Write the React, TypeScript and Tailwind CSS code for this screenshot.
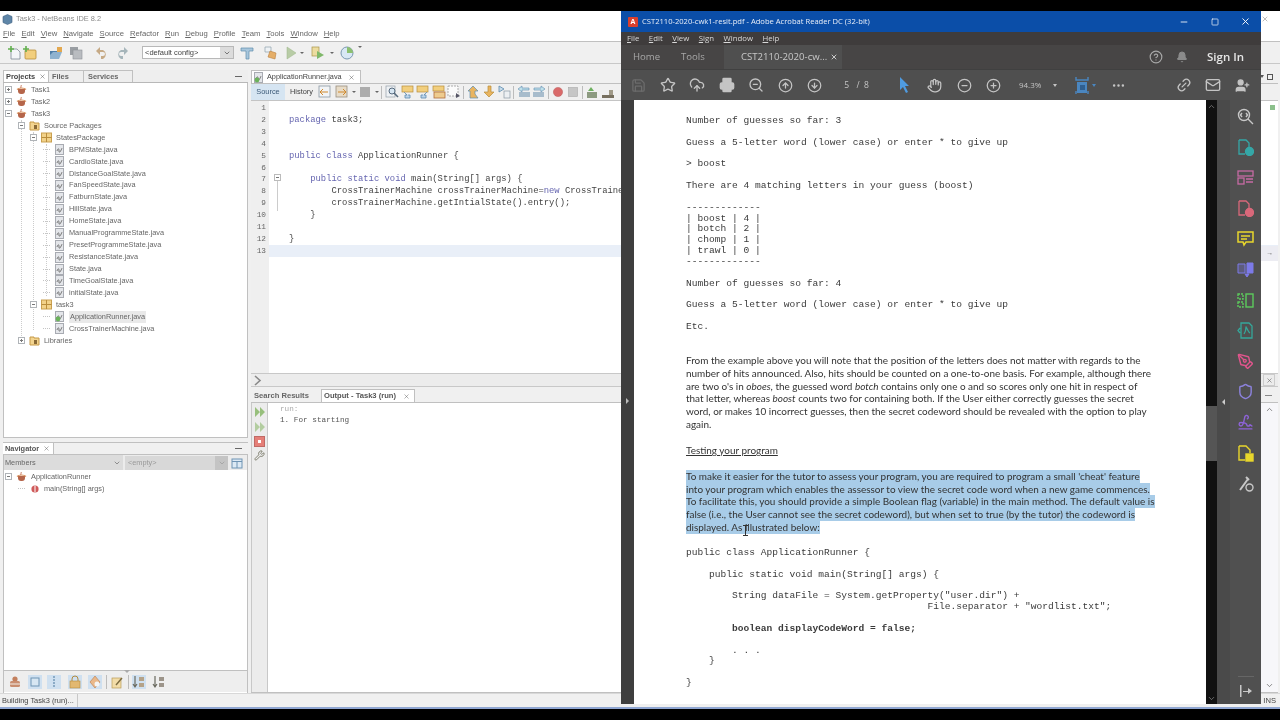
import React from 'react';
import {
  Save, Star, CloudUpload, Printer, ZoomOut, CircleArrowUp, CircleArrowDown, Hand, CircleMinus, CirclePlus,
  CircleHelp, Bell, Mail, Link2, UserPlus, ChevronUp, ChevronDown, Minus, Square, X, MoreHorizontal, Wrench,
  PenTool, Shield, Signature,
} from 'lucide-react';

const nbMenu = ['File', 'Edit', 'View', 'Navigate', 'Source', 'Refactor', 'Run', 'Debug', 'Profile', 'Team', 'Tools', 'Window', 'Help'];
const stateFiles = ['BPMState.java', 'CardioState.java', 'DistanceGoalState.java', 'FanSpeedState.java', 'FatburnState.java', 'HillState.java', 'HomeState.java', 'ManualProgrammeState.java', 'PresetProgrammeState.java', 'ResistanceState.java', 'State.java', 'TimeGoalState.java', 'initialState.java'];

function Box({ open }: { open?: boolean }) {
  return (
    <span className="relative w-[7px] h-[7px] border border-[#b0b4b8] bg-white shrink-0">
      <span className="absolute left-[1px] top-[2px] w-[3px] h-px bg-[#777]" />
      {!open && <span className="absolute left-[2px] top-[1px] w-px h-[3px] bg-[#777]" />}
    </span>
  );
}

function Cup() {
  return (
    <svg width="11" height="11" viewBox="0 0 11 11" className="shrink-0">
      <path d="M2 5h7v2a3 3 0 0 1-3 3H5a3 3 0 0 1-3-3z" fill="#b5654a" />
      <path d="M1 5.5c2-2 7-2 9 0" fill="none" stroke="#d88f5a" strokeWidth="1.2" />
      <path d="M5 1c1 1-1 2 0 3" fill="none" stroke="#c9785a" />
    </svg>
  );
}

function JavaDoc({ run }: { run?: boolean }) {
  return (
    <svg width="9" height="11" viewBox="0 0 9 11" className="shrink-0">
      <rect x="0.5" y="0.5" width="8" height="10" fill="#e4e6ea" stroke="#a8abb2" />
      <path d="M2 7c1-3 2-3 2 0s2 0 3-3" fill="none" stroke="#777" />
      {run && <circle cx="3" cy="8" r="2.4" fill="#6bb35b" />}
    </svg>
  );
}

function Pkg() {
  return (
    <svg width="11" height="11" viewBox="0 0 11 11" className="shrink-0">
      <rect x="0.5" y="1" width="10" height="9" fill="#f2d28a" stroke="#c9a050" />
      <path d="M5.5 1v9M0.5 5.5h10" stroke="#b98d3c" />
    </svg>
  );
}

function Folder() {
  return (
    <svg width="11" height="11" viewBox="0 0 11 11" className="shrink-0">
      <path d="M1 2h4v1h5v7H1z" fill="#f3d48f" stroke="#c69a48" />
      <rect x="5" y="5" width="3" height="4" fill="#8a6a36" />
    </svg>
  );
}

function Row({ pad, box, open, icon, label, active }: { pad: string; box?: boolean; open?: boolean; icon: React.ReactNode; label: string; active?: boolean }) {
  return (
    <div className={`h-[11.95px] flex items-center ${pad}`}>
      {box ? <Box open={open} /> : <span className="w-[7px] border-t border-dotted border-[#c4c4c4]" />}
      <span className="ml-[4px] w-[11px] flex justify-center shrink-0">{icon}</span>
      <span className={`ml-[4px] leading-3 ${active ? 'bg-[#e9e9e9] px-[1px] -ml-[-3px]' : ''}`}>{label}</span>
    </div>
  );
}

const Drop = ({ c = '#666' }: { c?: string }) => (
  <span className="w-0 h-0 border-x-[2px] border-x-transparent border-t-[2px] shrink-0" style={{ borderTopColor: c }} />
);

// IDE toolbar pictures, drawn on a 14 box
function Tb({ n, x = '', on }: { n: string; x?: string; on?: boolean }) {
  const pics: Record<string, React.ReactNode> = {
    newFile: <><path d="M3 3h6l3 3v7H3z" fill="#f4f6f8" stroke="#7f8a94" strokeWidth="0.8" /><path d="M3 0v6M0 3h6" stroke="#63b04f" strokeWidth="1.6" /></>,
    newProj: <><rect x="2" y="4" width="11" height="9" rx="1" fill="#f2cf7e" stroke="#b88d3a" strokeWidth="0.8" /><path d="M3 0v6M0 3h6" stroke="#63b04f" strokeWidth="1.6" /></>,
    open: <><path d="M1 5h9v8H1z" fill="#4f7ea8" /><path d="M1 9l3-3h9l-3 7H1z" fill="#8fb2cf" /><rect x="8" y="1" width="5" height="5" fill="#e3a850" /></>,
    saveAll: <><rect x="1" y="1" width="8" height="8" fill="#9a9ea3" /><rect x="4" y="4" width="9" height="9" fill="#b9bcc0" stroke="#8d9196" strokeWidth="0.6" /></>,
    undo: <path d="M1 5l4-4v3h3a5 5 0 0 1 0 9H6v-3h2a2 2 0 0 0 0-4H5v3z" fill="#c6aa86" />,
    redo: <path d="M13 5L9 1v3H6a5 5 0 0 0 0 9h2v-3H6a2 2 0 0 1 0-4h3v3z" fill="#a6b5ba" />,
    hammer: <path d="M1 2h12v3H9v8H6V5H1z" fill="#a8c6dc" stroke="#5e8cae" strokeWidth="0.7" />,
    broom: <><path d="M2 1h6v5H2z" fill="#eef2f5" stroke="#8ea0ae" strokeWidth="0.7" /><path d="M7 5l6 2-1 6-7-2z" fill="#e5ae68" stroke="#b98040" strokeWidth="0.6" /></>,
    run: <path d="M3 1l9 6-9 6z" fill="#b8cca6" stroke="#9db489" strokeWidth="0.5" />,
    debug: <><rect x="1" y="1" width="7" height="9" fill="#ecdca0" stroke="#a89448" strokeWidth="0.7" /><path d="M6 5l7 4-7 4z" fill="#7fb86a" /></>,
    back: <><rect x="1" y="1" width="11" height="11" fill="#f2f4f6" stroke="#8b98a4" strokeWidth="0.8" /><path d="M5 4L2 7l3 3M2 7h8" stroke="#d0892c" fill="none" /></>,
    fwd: <><rect x="1" y="1" width="11" height="11" fill="#e8dcc8" stroke="#9a9080" strokeWidth="0.8" /><path d="M8 4l3 3-3 3M11 7H3" stroke="#d0892c" fill="none" /></>,
    block: <rect x="2" y="2" width="10" height="10" fill="#adadad" />,
    find: <><rect x="1" y="1" width="9" height="11" fill="#eef1f4" stroke="#96a0aa" strokeWidth="0.7" /><circle cx="7" cy="6" r="3" fill="#d7e6f2" stroke="#55697c" /><path d="M9 8l4 4" stroke="#55697c" strokeWidth="1.6" /></>,
    prevOcc: <><rect x="1" y="1" width="11" height="6" fill="#f2cf7e" stroke="#b88d3a" strokeWidth="0.7" /><path d="M3 7l3 3h-2v3h5v-3H7" fill="#bcd4ea" stroke="#5e8cae" strokeWidth="0.8" /></>,
    nextOcc: <><rect x="1" y="1" width="11" height="6" fill="#f2cf7e" stroke="#b88d3a" strokeWidth="0.7" /><path d="M11 7l-3 3h2v3H5v-3h2" fill="#bcd4ea" stroke="#5e8cae" strokeWidth="0.8" /></>,
    toggle: <><rect x="1" y="1" width="11" height="5" fill="#f2cf7e" stroke="#b88d3a" strokeWidth="0.7" /><rect x="2" y="7" width="11" height="6" fill="#eecb8e" stroke="#b06c3a" strokeWidth="0.8" /></>,
    selBox: <><rect x="1" y="1" width="10" height="10" fill="#fbfbfb" stroke="#8c8c8c" strokeWidth="0.7" strokeDasharray="2 1" /><path d="M9 8l4 3-4 2z" fill="#556" /></>,
    up: <path d="M7 1l5 5H9v3l3 4H4V6H2z" fill="#e9b45f" stroke="#5e8cae" strokeWidth="0.7" />,
    down: <path d="M6 1h3v6h3l-5 5-5-5h4z" fill="#e9b45f" stroke="#b88d3a" strokeWidth="0.7" />,
    bm: <><path d="M2 1l5 3-5 3z" fill="#c7dcea" stroke="#5e8cae" strokeWidth="0.8" /><rect x="7" y="6" width="6" height="7" fill="#eceff2" stroke="#8b98a4" strokeWidth="0.7" /></>,
    shL: <><rect x="2" y="7" width="11" height="5" fill="#a8bccc" /><path d="M1 4l4-3v2h7v2H5v2z" fill="#bfe0ea" stroke="#5e8cae" strokeWidth="0.6" /></>,
    shR: <><rect x="1" y="7" width="11" height="5" fill="#a8bccc" /><path d="M13 4L9 1v2H2v2h7v2z" fill="#bfe0ea" stroke="#5e8cae" strokeWidth="0.6" /></>,
    rec: <circle cx="7" cy="7" r="4.6" fill="#d96a6a" stroke="#bb5a5a" strokeWidth="0.5" />,
    stop: <rect x="2.5" y="2.5" width="9" height="9" fill="#c6c6c6" stroke="#a8a8a8" strokeWidth="0.6" />,
    check: <><rect x="2" y="7" width="10" height="6" fill="#8c9a80" /><path d="M3 6l3-4 3 4z" fill="#6db05f" /></>,
    under: <><rect x="1" y="10" width="12" height="3" fill="#77705f" /><rect x="8" y="5" width="4" height="5" fill="#a09a88" /></>,
    group: <><circle cx="7" cy="4" r="2.6" fill="#c3805e" /><rect x="2" y="6" width="10" height="6" rx="1.5" fill="#c98e70" /><path d="M2 9h10" stroke="#f4efe8" /></>,
    hollow: <rect x="3" y="3" width="8" height="8" fill="#d7e6f2" stroke="#6f94b4" />,
    bar: <path d="M7 1v12" stroke="#6f94b4" strokeWidth="1.4" strokeDasharray="2 1" />,
    lock: <><path d="M4 6V4a3 3 0 0 1 6 0v2" fill="none" stroke="#b48a3e" /><rect x="2" y="6" width="10" height="7" fill="#e2b870" stroke="#b48a3e" strokeWidth="0.6" /></>,
    cls: <><path d="M7 1l5 6-5 6-5-6z" fill="#e9b88a" stroke="#b87a4a" strokeWidth="0.6" /><circle cx="9" cy="9" r="2.5" fill="#f4f4f4" /></>,
    pen: <><rect x="2" y="3" width="9" height="10" fill="#f2dca8" stroke="#b89a58" strokeWidth="0.7" /><path d="M6 10l6-7" stroke="#7a6a40" strokeWidth="1.4" /></>,
    sortA: <><path d="M3 1v10M1 9l2 3 2-3" stroke="#6a6a60" fill="none" strokeWidth="1.2" /><rect x="7" y="2" width="5" height="4" fill="#b4a288" /><rect x="7" y="8" width="5" height="4" fill="#b4a288" /></>,
    sortB: <><path d="M3 1v10M1 9l2 3 2-3" stroke="#6a6a60" fill="none" strokeWidth="1.2" /><rect x="7" y="2" width="5" height="4" fill="#9c948a" /><rect x="7" y="8" width="5" height="4" fill="#9c948a" /></>,
  };
  return (
    <span className={`shrink-0 flex ${x} ${on ? 'bg-[#cfe0f0]' : ''}`}>
      <svg width="14" height="14" viewBox="0 0 14 14">{pics[n]}</svg>
    </span>
  );
}

function Code({ children }: { children?: React.ReactNode }) {
  return <div className="h-[11.92px] leading-3 whitespace-pre">{children || ' '}</div>;
}

const K = ({ children }: { children: React.ReactNode }) => <span className="text-[#6666b0]">{children}</span>;

function NetBeans() {
  return (
    <div className="flex-1 flex flex-col min-h-0 bg-[#f0f0f0] text-[#444] font-['Liberation_Sans',sans-serif] text-[7.4px]">
      <div className="h-[16px] bg-white flex items-center pl-[2px] text-[#8a8a8a] text-[7.4px] shrink-0">
        <svg width="11" height="11" viewBox="0 0 11 11" className="mr-[3px]">
          <path d="M5.5 0.5l4.5 2v6l-4.5 2-4.5-2v-6z" fill="#5f86a8" stroke="#3f5f80" strokeWidth="0.6" />
        </svg>
        Task3 - NetBeans IDE 8.2
        <span className="ml-auto pr-[11px] text-[#999]"><X size={8} /></span>
      </div>
      <div className="h-[15px] bg-white flex items-center pl-[3px] gap-[6px] shrink-0 border-b border-[#c0c0c0] text-[#666] text-[7.7px]">
        {nbMenu.map((m) => (
          <span key={m}><span className="underline">{m[0]}</span>{m.slice(1)}</span>
        ))}
      </div>
      <div className="h-[22px] flex items-center border-b border-[#c8c8c8] shrink-0 pl-[8px]">
        <Tb n="newFile" x="mr-[1px]" />
        <Tb n="newProj" x="mr-[12px]" />
        <Tb n="open" x="mr-[6px]" />
        <Tb n="saveAll" x="mr-[12px]" />
        <Tb n="undo" x="mr-[6px]" />
        <Tb n="redo" x="mr-[13px]" />
        <div className="w-[92px] h-[13px] bg-white border border-[#b8b8b8] flex items-center justify-between pl-[2px] text-[7.5px] text-[#444] mr-[6px] shrink-0">
          &lt;default config&gt;
          <span className="w-[13px] h-full bg-[#dcdcdc] flex items-center justify-center"><ChevronDown size={8} /></span>
        </div>
        <Tb n="hammer" x="mr-[9px]" />
        <Tb n="broom" x="mr-[7px]" />
        <Tb n="run" x="mr-[2px]" />
        <Drop />
        <Tb n="debug" x="ml-[7px] mr-[5px]" />
        <Drop />
        <span className="ml-[6px] flex items-center">
          <svg width="14" height="14" viewBox="0 0 14 14"><circle cx="7" cy="7" r="6" fill="#d8e8f4" stroke="#7a98b0" /><path d="M7 7V1a6 6 0 0 1 6 6z" fill="#8cc070" /></svg>
          <span className="ml-[4px]"><Drop /></span>
        </span>
      </div>
      <div className="flex-1 min-h-0 flex pt-[6px]">
        <div className="w-[248px] pl-[3px] shrink-0 flex flex-col">
          <div className="h-[13px] flex items-stretch font-bold text-[#666] text-[7.4px] border-b border-[#b8b8b8] shrink-0 bg-[#eeeeee]">
            <span className="w-[46px] bg-white border border-b-0 border-[#c0c0c0] flex items-center pl-[2px] gap-[4px] text-[#444]">Projects <X size={7} strokeWidth={1.5} /></span>
            <span className="w-[35px] border-r border-t border-[#c0c0c0] flex items-center pl-[3px]">Files</span>
            <span className="w-[49px] border-r border-t border-[#c0c0c0] flex items-center pl-[4px]">Services</span>
            <span className="ml-auto mr-[6px] self-center w-[7px] h-px bg-[#666]" />
          </div>
          <div className="relative h-[355px] pt-[1px] bg-white border-x border-[#c0c0c0] border-b shrink-0 text-[7.35px] text-[#666]">
            <span className="absolute left-[17px] top-[37px] h-[220px] border-l border-dotted border-[#ccc]" />
            <span className="absolute left-[29px] top-[49px] h-[198px] border-l border-dotted border-[#ccc]" />
            <span className="absolute left-[42px] top-[61px] h-[152px] border-l border-dotted border-[#ccc]" />
            <Row pad="pl-[1px]" box icon={<Cup />} label="Task1" />
            <Row pad="pl-[1px]" box icon={<Cup />} label="Task2" />
            <Row pad="pl-[1px]" box open icon={<Cup />} label="Task3" />
            <Row pad="pl-[14px]" box open icon={<Folder />} label="Source Packages" />
            <Row pad="pl-[26px]" box open icon={<Pkg />} label="StatesPackage" />
            {stateFiles.map((f) => (
              <Row key={f} pad="pl-[39px]" icon={<JavaDoc />} label={f} />
            ))}
            <Row pad="pl-[26px]" box open icon={<Pkg />} label="task3" />
            <Row pad="pl-[39px]" icon={<JavaDoc run />} label="ApplicationRunner.java" active />
            <Row pad="pl-[39px]" icon={<JavaDoc />} label="CrossTrainerMachine.java" />
            <Row pad="pl-[14px]" box icon={<Folder />} label="Libraries" />
          </div>
          <div className="h-[4px] shrink-0" />
          <div className="h-[13px] flex items-stretch font-bold text-[#555] text-[7.4px] border-t border-b border-[#c0c0c0] shrink-0">
            <span className="w-[51px] bg-white border-r border-[#c0c0c0] flex items-center pl-[2px] gap-[4px]">Navigator <X size={7} strokeWidth={1.5} /></span>
            <span className="ml-auto mr-[6px] self-center w-[7px] h-px bg-[#666]" />
          </div>
          <div className="flex-1 min-h-0 bg-white border-x border-[#c0c0c0] flex flex-col text-[7.35px] text-[#666]">
            <div className="h-[15px] flex items-center bg-[#ececec] shrink-0 gap-[2px]">
              <span className="w-[119px] h-full bg-[#dcdcdc] flex items-center justify-between px-[1px]">Members<ChevronDown size={8} className="mr-[1px]" /></span>
              <span className="w-[103px] h-[14px] bg-[#d8d8d8] flex items-center justify-between pl-[3px] text-[#999]">&lt;empty&gt;<span className="w-[13px] h-full bg-[#c4c4c4] flex items-center justify-center"><ChevronDown size={8} /></span></span>
              <svg width="12" height="12" viewBox="0 0 12 12" className="ml-[1px]"><rect x="1" y="2" width="10" height="9" fill="#dce9f4" stroke="#6f94b4" /><path d="M1 4.5h10M6 4.5V11" stroke="#6f94b4" /></svg>
            </div>
            <div className="pt-[1px] h-[200px] shrink-0">
              <Row pad="pl-[1px]" box open icon={<Cup />} label="ApplicationRunner" />
              <Row pad="pl-[14px]" icon={<svg width="8" height="8" viewBox="0 0 8 8"><circle cx="4" cy="4" r="3.6" fill="#cf5a5a" /><path d="M4 1v6" stroke="#fff" /></svg>} label="main(String[] args)" />
            </div>
            <div className="h-[22px] border-t border-[#c0c0c0] bg-[#eeeeee] flex items-center pl-[4px] shrink-0 relative">
              <span className="absolute left-[120px] -top-[1px] w-0 h-0 border-x-[3px] border-x-transparent border-t-[3px] border-t-[#aaa]" />
              <Tb n="group" x="mr-[6px]" />
              <Tb n="hollow" x="mr-[5px]" on />
              <Tb n="bar" x="mr-[7px]" on />
              <Tb n="lock" x="mr-[6px]" on />
              <Tb n="cls" x="mr-[4px]" on />
              <span className="w-px h-[14px] bg-[#bcbcbc] mr-[3px]" />
              <Tb n="pen" x="mr-[4px]" />
              <span className="w-px h-[14px] bg-[#bcbcbc] mr-[3px]" />
              <Tb n="sortA" x="mr-[6px]" on />
              <Tb n="sortB" />
            </div>
          </div>
        </div>

        <div className="flex-1 min-w-0 ml-[3px] flex flex-col pr-[2px]">
          <div className="h-[14px] flex border-b border-[#c0c0c0] shrink-0 items-stretch">
            <span className="w-[110px] bg-white border border-b-0 border-[#c0c0c0] flex items-center pl-[2px] gap-[2px]">
              <JavaDoc run /><span className="ml-[2px] text-[7.3px]">ApplicationRunner.java</span><X size={7} strokeWidth={1.5} className="ml-[4px]" />
            </span>
            <span className="ml-auto flex items-center gap-[3px] pr-[5px]">
              <span className="w-0 h-0 border-x-[2px] border-x-transparent border-t-[3px] border-t-[#555]" />
              <span className="w-[6px] h-[6px] border border-[#555]" />
            </span>
          </div>
          <div className="h-[17px] flex items-center bg-[#f0f0f0] border-b border-[#c4c4c4] shrink-0">
            <span className="h-full w-[34px] bg-[#d6e5f2] flex items-center justify-center text-[#3c5a78]">Source</span>
            <span className="ml-[5px] w-[28px] shrink-0">History</span>
            <Tb n="back" x="mr-[3px]" />
            <Tb n="fwd" x="mr-[3px]" />
            <Drop />
            <Tb n="block" x="ml-[2px] mr-[3px]" />
            <Drop />
            <span className="w-px h-[13px] bg-[#bcbcbc] ml-[2px] mr-[3px]" />
            <Tb n="find" x="mr-[2px]" />
            <Tb n="prevOcc" x="mr-[1px]" />
            <Tb n="nextOcc" x="mr-[2px]" />
            <Tb n="toggle" x="mr-[1px]" />
            <Tb n="selBox" x="mr-[2px]" />
            <span className="w-px h-[13px] bg-[#bcbcbc] mr-[2px]" />
            <Tb n="up" x="mr-[2px]" />
            <Tb n="down" x="mr-[1px]" />
            <Tb n="bm" x="mr-[2px]" />
            <span className="w-px h-[13px] bg-[#bcbcbc] mr-[3px]" />
            <Tb n="shL" x="mr-[1px]" />
            <Tb n="shR" x="mr-[2px]" />
            <span className="w-px h-[13px] bg-[#bcbcbc] mr-[2px]" />
            <Tb n="rec" x="mr-[1px]" />
            <Tb n="stop" x="mr-[2px]" />
            <span className="w-px h-[13px] bg-[#bcbcbc] mr-[2px]" />
            <Tb n="check" x="mr-[2px]" />
            <Tb n="under" />
          </div>
          <div className="h-[272px] bg-white flex shrink-0 font-['Liberation_Mono',monospace] text-[8.85px] text-[#444]">
            <div className="w-[18px] bg-[#efefef] text-right pr-[3px] pt-[1px] text-[#666] text-[7.8px] shrink-0">
              {Array.from({ length: 13 }, (_, i) => (
                <div key={i} className="h-[11.92px] leading-3">{i + 1}</div>
              ))}
            </div>
            <div className="flex-1 min-w-0 pl-[20px] pt-[1px] overflow-hidden relative">
              <span className="absolute left-[5px] top-[73px] w-[7px] h-[7px] border border-[#bbb] flex items-center justify-center"><span className="w-[3px] h-px bg-[#777]" /></span>
              <span className="absolute left-[8px] top-[80px] h-[30px] border-l border-[#ccc]" />
              <span className="absolute right-[3px] top-[4px] w-[5px] h-[5px] bg-[#8cc08c]" />
              <span className="absolute right-0 top-[145px] w-[17px] h-[15px] bg-[#ececf2] flex items-center justify-center text-[#666] text-[7px]">→</span>
              <Code />
              <Code><K>package</K> task3;</Code>
              <Code />
              <Code />
              <Code><K>public class</K> ApplicationRunner {'{'}</Code>
              <Code />
              <Code>    <K>public static void</K> main(String[] args) {'{'}</Code>
              <Code>        CrossTrainerMachine crossTrainerMachine=<K>new</K> CrossTrainerMachine();</Code>
              <Code>        crossTrainerMachine.getIntialState().entry();</Code>
              <Code>    {'}'}</Code>
              <Code />
              <Code>{'}'}</Code>
              <div className="h-3 bg-[#e9eff8] -ml-[20px] pl-[20px]" />
            </div>
          </div>
          <div className="h-[14px] bg-[#ececec] border-y border-[#c8c8c8] flex items-center pl-[2px] shrink-0 text-[#888]">
            <svg width="9" height="11" viewBox="0 0 9 11"><path d="M2 1l5 4.5-5 4.5" fill="none" stroke="#888" strokeWidth="1.6" /></svg>
            <span className="ml-auto mr-[3px] w-[12px] h-[12px] border border-[#ccc] flex items-center justify-center text-[#666]"><X size={7} /></span>
          </div>
          <div className="h-[2px] shrink-0" />
          <div className="h-[14px] flex border-b border-[#c0c0c0] font-bold text-[#666] text-[7.6px] shrink-0 items-stretch">
            <span className="w-[70px] flex items-center pl-[3px]">Search Results</span>
            <span className="w-[94px] bg-white border border-b-0 border-[#c0c0c0] flex items-center pl-[2px] justify-between pr-[4px] text-[#555]">Output - Task3 (run) <X size={7} strokeWidth={1.5} /></span>
            <span className="ml-auto mr-[6px] self-center w-[7px] h-px bg-[#888]" />
          </div>
          <div className="flex-1 min-h-0 flex bg-white">
            <div className="w-[17px] bg-[#ececec] border-x border-[#c8c8c8] flex flex-col items-center gap-[3px] pt-[3px] shrink-0">
              <svg width="12" height="12" viewBox="0 0 12 12"><path d="M1 1l5 5-5 5zM6 1l5 5-5 5z" fill="#97bf7c" /></svg>
              <svg width="12" height="12" viewBox="0 0 12 12"><path d="M1 1l5 5-5 5zM6 1l5 5-5 5z" fill="#b3cda0" /></svg>
              <span className="w-[11px] h-[11px] bg-[#e57f78] border border-[#c06a66] flex items-center justify-center"><span className="w-[3px] h-[3px] bg-white" /></span>
              <Wrench size={11} className="text-[#776]" />
            </div>
            <div className="pl-[12px] pt-[1px] font-['Liberation_Mono',monospace] text-[7.7px] leading-[11px] text-[#555] flex-1 min-w-0 whitespace-pre">
              <div className="text-[#aaa]">run:</div>
              <div>1. For starting</div>
            </div>
            <div className="w-[17px] flex flex-col items-center justify-between text-[#666] py-[2px] shrink-0 bg-[#f7f7fa]">
              <ChevronUp size={9} />
              <ChevronDown size={9} />
            </div>
          </div>
          <div className="h-px bg-[#c0c0c0] shrink-0" />
        </div>
      </div>
      <div className="h-[16px] border-t border-[#d8d8d8] flex items-center justify-between shrink-0 text-[7.45px] border-b-2 border-b-[#8fa6d2]">
        <span className="pl-[2px] pr-[3px] h-full border-r border-[#c8c8c8] flex items-center text-[#444]">Building Task3 (run)...</span>
        <span className="pr-[4px] text-[#444] text-[7.6px]">INS</span>
      </div>
    </div>
  );
}

const pageTop = `Number of guesses so far: 3

Guess a 5-letter word (lower case) or enter * to give up

> boost

There are 4 matching letters in your guess (boost)

-------------
| boost | 4 |
| botch | 2 |
| chomp | 1 |
| trawl | 0 |
-------------

Number of guesses so far: 4

Guess a 5-letter word (lower case) or enter * to give up

Etc.`;

const codeHead = `public class ApplicationRunner {

    public static void main(String[] args) {

        String dataFile = System.getProperty("user.dir") +
                                          File.separator + "wordlist.txt";`;

const codeTail = `        . . .
    }

}`;

const selected = [
  "To make it easier for the tutor to assess your program, you are required to program a small 'cheat' feature",
  'into your program which enables the assessor to view the secret code word when a new game commences.',
  'To facilitate this, you should provide a simple Boolean flag (variable) in the main method. The default value is',
  'false (i.e., the User cannot see the secret codeword), but when set to true (by the tutor) the codeword is',
  'displayed. As illustrated below:',
];

function ToolBtn({ children, w = 'w-[29.3px]' }: { children: React.ReactNode; w?: string }) {
  return <span className={`${w} flex justify-center items-center shrink-0`}>{children}</span>;
}

function Acrobat() {
  return (
    <div className="absolute left-[621px] top-0 w-[640px] h-[693px] flex flex-col bg-[#4a4a4a] text-[#cfcfcf] font-['Open_Sans',sans-serif] overflow-hidden">
      <div className="h-[21px] bg-[#0b4ea8] flex items-center pl-[7px] text-[7.6px] text-[#e8eef8] shrink-0">
        <span className="w-[10px] h-[10px] rounded-[1px] bg-[#d9402f] text-white text-[7px] font-bold leading-[10px] text-center mr-[4px]">A</span>
        CST2110-2020-cwk1-resit.pdf - Adobe Acrobat Reader DC (32-bit)
        <span className="ml-auto flex items-center text-white">
          <ToolBtn w="w-[31px]"><Minus size={10} /></ToolBtn>
          <ToolBtn w="w-[31px]"><Square size={8} /></ToolBtn>
          <ToolBtn w="w-[31px]"><X size={11} /></ToolBtn>
        </span>
      </div>
      <div className="h-[13px] bg-[#3f3c3c] flex items-center pl-[6px] gap-[9.5px] text-[7.8px] text-[#d8d8d8] shrink-0">
        {['File', 'Edit', 'View', 'Sign', 'Window', 'Help'].map((m) => (
          <span key={m}><span className="underline">{m[0]}</span>{m.slice(1)}</span>
        ))}
      </div>
      <div className="h-[24px] bg-[#474545] flex items-stretch pl-[12px] text-[9.6px] text-[#a8a8a8] shrink-0">
        <span className="flex items-center w-[48px]">Home</span>
        <span className="flex items-center w-[43px]">Tools</span>
        <span className="bg-[#4f4f4f] w-[118px] flex items-center pl-[17px] text-[9.6px] text-[#c8c8c8] justify-between pr-[4px]">CST2110-2020-cw...<X size={8} strokeWidth={3} /></span>
        <span className="ml-auto flex items-center pr-[17px]">
          <CircleHelp size={14} className="mr-[13px]" />
          <Bell size={12} fill="#8a8a8a" className="text-[#8a8a8a] mr-[19px]" />
          <span className="font-semibold text-[#e6e6e6] text-[11.5px]">Sign In</span>
        </span>
      </div>
      <div className="h-[31px] bg-[#4f4f4f] border-t border-[#404040] flex items-center pl-[3px] shrink-0 text-[#c4c4c4]">
        <ToolBtn><Save size={15} className="text-[#6c6c6c]" /></ToolBtn>
        <ToolBtn><Star size={16} /></ToolBtn>
        <ToolBtn><CloudUpload size={16} /></ToolBtn>
        <ToolBtn><Printer size={16} fill="#c4c4c4" className="text-[#c4c4c4]" /></ToolBtn>
        <ToolBtn><ZoomOut size={16} /></ToolBtn>
        <ToolBtn><CircleArrowUp size={15} /></ToolBtn>
        <ToolBtn><CircleArrowDown size={15} /></ToolBtn>
        <span className="w-[56px] shrink-0 text-center text-[8.5px] tracking-[1px]">5&nbsp;&nbsp;/ 8</span>
        <span className="w-[4px] shrink-0" />
        <ToolBtn w="w-[31px]">
          <svg width="11" height="16" viewBox="0 0 11 16"><path d="M1 0l9 9H6l3 6-2 1-3-6-3 3z" fill="#4f9be0" /></svg>
        </ToolBtn>
        <ToolBtn><Hand size={15} /></ToolBtn>
        <ToolBtn><CircleMinus size={15} /></ToolBtn>
        <ToolBtn><CirclePlus size={15} /></ToolBtn>
        <span className="ml-[11px] w-[30px] text-[8px] shrink-0">94.3%</span>
        <span className="w-0 h-0 border-x-[2.5px] border-x-transparent border-t-[3px] border-t-[#c4c4c4] ml-[4px] shrink-0" />
        <span className="ml-[18px] shrink-0">
          <svg width="14" height="19" viewBox="0 0 14 19"><path d="M1 1v3h12V1M1 18v-3M13 18v-3" stroke="#4a86c0" fill="none" strokeWidth="1.4" /><rect x="2" y="6" width="10" height="11" fill="#4a86c0" /><path d="M5 9h5v5H5z" fill="#2f5f90" /></svg>
        </span>
        <span className="ml-[3px] w-0 h-0 border-x-[2.5px] border-x-transparent border-t-[3px] border-t-[#4a86c0] shrink-0" />
        <span className="ml-[15px]"><MoreHorizontal size={15} /></span>
        <span className="ml-auto flex items-center pr-[4px]">
          <ToolBtn><Link2 size={16} className="-rotate-45" /></ToolBtn>
          <ToolBtn><Mail size={16} /></ToolBtn>
          <ToolBtn><UserPlus size={15} fill="#c4c4c4" /></ToolBtn>
        </span>
      </div>
      <div className="flex-1 min-h-0 flex">
        <div className="w-[13px] bg-[#3e3e3e] flex items-center justify-center shrink-0">
          <span className="w-0 h-0 border-y-[3px] border-y-transparent border-l-[3px] border-l-[#bbb] mt-[-2px]" />
        </div>
        <div className="w-[572px] bg-white text-[#3a3a3a] pl-[52px] pt-[16px] shrink-0 overflow-hidden">
          <pre className="font-['Liberation_Mono',monospace] text-[9.58px] leading-[10.85px]">{pageTop}</pre>
          <div className="mt-[21px] font-['Lato',sans-serif] text-[9.95px] leading-[12.85px] whitespace-nowrap text-[#333]">
            From the example above you will note that the position of the letters does not matter with regards to the<br />
            number of hits announced. Also, hits should be counted on a one-to-one basis. For example, although there<br />
            are two o's in <i>oboes</i>, the guessed word <i>botch</i> contains only one o and so scores only one hit in respect of<br />
            that letter, whereas <i>boost</i> counts two for containing both. If the User either correctly guesses the secret<br />
            word, or makes 10 incorrect guesses, then the secret codeword should be revealed with the option to play<br />
            again.
          </div>
          <div className="mt-[13px] font-['Lato',sans-serif] text-[9.95px] leading-[12.85px] underline text-[#333]">Testing your program</div>
          <div className="relative mt-[13px] font-['Lato',sans-serif] text-[9.95px] leading-[12.85px] text-[#333]">
            {selected.map((s) => (
              <div key={s} className="w-fit bg-[#a8cce8] whitespace-nowrap">{s}</div>
            ))}
            <svg width="7" height="11" viewBox="0 0 7 11" className="absolute left-[56px] top-[55px]" fill="none" stroke="#333"><path d="M1 .5h5M3.5.5v10M1 10.5h5" /></svg>
          </div>
          <pre className="mt-[14px] font-['Liberation_Mono',monospace] text-[9.58px] leading-[10.85px]">{codeHead}</pre>
          <pre className="mt-[10.85px] font-['Liberation_Mono',monospace] font-bold text-[9.58px] leading-[10.85px]">{'        boolean displayCodeWord = false;'}</pre>
          <pre className="mt-[10.85px] font-['Liberation_Mono',monospace] text-[9.58px] leading-[10.85px]">{codeTail}</pre>
        </div>
        <div className="w-[11px] bg-[#111] flex flex-col items-center shrink-0 text-[#888] relative">
          <ChevronUp size={9} className="mt-[2px]" />
          <span className="absolute top-[306px] left-0 right-0 h-[55px] bg-[#555]" />
          <ChevronDown size={9} className="mt-auto mb-[1px]" />
        </div>
        <div className="w-[13px] bg-[#4a4a4a] flex items-center justify-center shrink-0">
          <span className="w-0 h-0 border-y-[3px] border-y-transparent border-r-[3px] border-r-[#ccc]" />
        </div>
        <div className="flex-1 bg-[#505050] flex flex-col items-center pt-[8px] gap-[13.6px]">
          <svg width="17" height="17" viewBox="0 0 17 17" fill="none" stroke="#c8c8c8" strokeWidth="1.4"><circle cx="7" cy="7" r="5.5" /><path d="M11 11l5 5M5 5l-1.5 2L5 9M9 5l1.5 2L9 9" /></svg>
          <svg width="17" height="17" viewBox="0 0 17 17" fill="none" stroke="#35a7a7" strokeWidth="1.3"><path d="M2 1h7l3 3v5M2 1v14h6" /><circle cx="12.5" cy="12.5" r="4" fill="#35a7a7" /></svg>
          <svg width="17" height="17" viewBox="0 0 17 17" fill="none" stroke="#c66aa4" strokeWidth="1.3"><rect x="1" y="2" width="15" height="5" /><rect x="1" y="9" width="6" height="6" /><path d="M9 10h7M9 13h7" /></svg>
          <svg width="17" height="17" viewBox="0 0 17 17" fill="none" stroke="#d9687a" strokeWidth="1.3"><path d="M2 1h7l3 3v5M2 1v14h6" /><circle cx="12.5" cy="12.5" r="4" fill="#d9687a" /></svg>
          <svg width="17" height="17" viewBox="0 0 17 17" fill="none" stroke="#e8d62c" strokeWidth="1.5"><path d="M1 2h15v10H9l-2 3-1-3H1zM4 6h9M4 9h6" /></svg>
          <svg width="17" height="17" viewBox="0 0 17 17" fill="#7d7ae8" stroke="#7d7ae8" strokeWidth="1"><path d="M1 3h7v9H1z" fillOpacity="0.3" /><path d="M10 2h6v10h-6zM8 13l2 3 2-3z" /></svg>
          <svg width="17" height="17" viewBox="0 0 17 17" fill="none" stroke="#5ccb5c" strokeWidth="1.4"><rect x="9" y="2" width="7" height="13" /><path d="M1 2h5v5H1zM1 10h5v5H1z" strokeDasharray="2 1" /></svg>
          <svg width="17" height="17" viewBox="0 0 17 17" fill="none" stroke="#35a79a" strokeWidth="1.3"><path d="M4 1h8l3 3v12H4zM3 6L1 8.5 3 11" /><path d="M7 12c2-3 2-6 2-7s2 5 4 6" /></svg>
          <PenTool size={17} className="text-[#e0558c]" />
          <Shield size={17} className="text-[#8c82dc]" />
          <Signature size={17} className="text-[#8d63d6]" />
          <svg width="17" height="17" viewBox="0 0 17 17" fill="none" stroke="#e8d62c" strokeWidth="1.4"><path d="M2 1h7l4 4v3M2 1v14h6" /><rect x="9" y="9" width="7" height="7" fill="#e8d62c" /></svg>
          <svg width="17" height="17" viewBox="0 0 17 17" fill="none" stroke="#c8c8c8" strokeWidth="2"><path d="M3 15L11 4M9 2l3 3" /><circle cx="12.5" cy="12.5" r="3.5" strokeWidth="1.4" /></svg>
          <div className="mt-auto mb-[7px] w-[16px] border-t border-[#666] pt-[8px] flex justify-center">
            <svg width="12" height="12" viewBox="0 0 12 12" fill="#c8c8c8"><rect x="0" y="0" width="1.5" height="12" /><path d="M3 6h5V3l4 3-4 3V7H3z" /></svg>
          </div>
        </div>
      </div>
    </div>
  );
}

export default function App() {
  return (
    <div className="w-[1280px] h-[720px] bg-black flex flex-col overflow-hidden blur-[0.35px]">
      <div className="h-[11px] shrink-0" />
      <div className="relative flex-1 min-h-0 flex flex-col">
        <NetBeans />
        <Acrobat />
      </div>
      <div className="h-[11px] shrink-0" />
    </div>
  );
}
